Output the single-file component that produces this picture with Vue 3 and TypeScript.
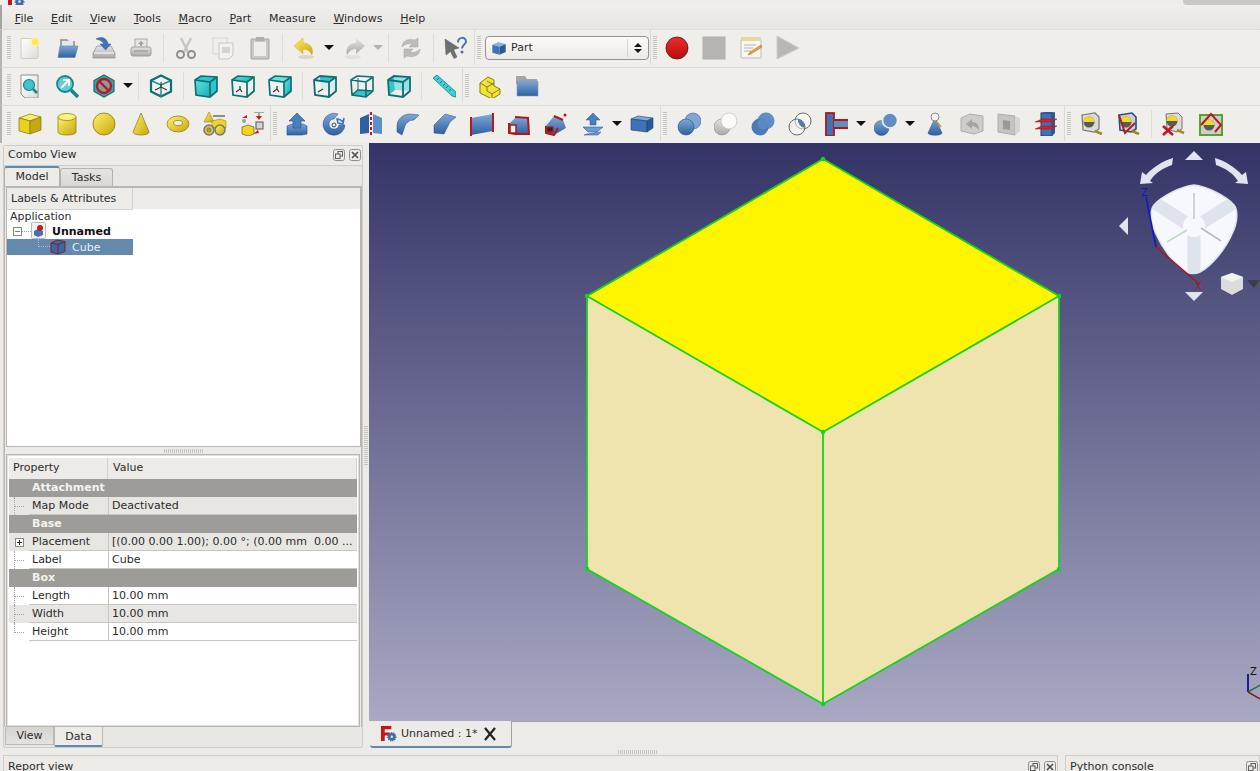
<template>
  <div class="app">
    <svg class="sprite" aria-hidden="true">
      <defs>
        <linearGradient id="gBlue" x1="0" y1="0" x2="0" y2="1"><stop offset="0" stop-color="#7ea8d8" /><stop offset="1" stop-color="#2f609f" /></linearGradient>
        <linearGradient id="gYel" x1="0" y1="0" x2="1" y2="1"><stop offset="0" stop-color="#fff26a" /><stop offset="1" stop-color="#c8a60a" /></linearGradient>
        <linearGradient id="gTeal" x1="0" y1="0" x2="1" y2="1"><stop offset="0" stop-color="#5fe3e3" /><stop offset="1" stop-color="#17aeb2" /></linearGradient>
        <linearGradient id="gGrey" x1="0" y1="0" x2="0" y2="1"><stop offset="0" stop-color="#e6e4e0" /><stop offset="1" stop-color="#aaa8a4" /></linearGradient>
        <linearGradient id="gRed" x1="0" y1="0" x2="0" y2="1"><stop offset="0" stop-color="#ee2a2a" /><stop offset="1" stop-color="#b50f0f" /></linearGradient>
        <linearGradient id="gPage" x1="0" y1="0" x2="1" y2="1"><stop offset="0" stop-color="#ffffff" /><stop offset="1" stop-color="#dddcd8" /></linearGradient>
        <clipPath id="blobClip"><path d="M1194 185C1206 186 1226 196 1234 205C1238 210 1238 222 1232 234C1226 248 1212 266 1200 272C1195 274 1191 274 1187 272C1175 266 1162 248 1156 234C1150 222 1150 210 1154 205C1162 196 1182 186 1194 185z" /></clipPath>
      </defs>

      <!-- file / edit -->
      <symbol id="new" viewBox="0 0 24 24"><rect x="3" y="2.500" width="17" height="20" rx="1" fill="url(#gPage)" stroke="#cdccc8" /><circle cx="17" cy="6" r="5" fill="#fff49a" opacity=".7" /><circle cx="17" cy="6" r="3" fill="#ffe84a" /></symbol>
      <symbol id="open" viewBox="0 0 24 24"><path d="M5 3h7l2 2h6v8H5z" fill="#a3a3a1" /><path d="M7 5h11v8H7z" fill="#e8e7e4" /><path d="M5 10h18l-3 11.500H3z" fill="url(#gBlue)" stroke="#5a83b8" stroke-width=".6" /></symbol>
      <symbol id="save" viewBox="0 0 24 24"><path d="M5 10h14l4 7v5H1v-5z" fill="url(#gGrey)" stroke="#8d8c88" stroke-width=".7" /><path d="M2 17h20" stroke="#fff" /><path d="M4 3c6-3 11-1 12 5h3l-5.500 6L8 8h3.500C11 5.500 8 4 4 3z" fill="#3f74b6" stroke="#2f5f9c" stroke-width=".5" /></symbol>
      <symbol id="print" viewBox="0 0 24 24"><rect x="6" y="3" width="12" height="9" fill="#e6e5e2" stroke="#a8a7a3" /><path d="M12 5l3 3h-2v2h-2V8H9z" fill="#9aa0a6" /><rect x="2" y="11" width="20" height="9" rx="2" fill="url(#gGrey)" stroke="#a09f9b" /><path d="M5 15h14" stroke="#8d8c88" /></symbol>
      <symbol id="cut" viewBox="0 0 24 24"><path d="M7 2l7 14M17 2l-7 14" stroke="#c6c5c1" stroke-width="2.400" fill="none" /><circle cx="6.500" cy="18.500" r="3.500" fill="none" stroke="#8f8e8a" stroke-width="2" /><circle cx="17.500" cy="18.500" r="3.500" fill="none" stroke="#8f8e8a" stroke-width="2" /></symbol>
      <symbol id="copy" viewBox="0 0 24 24"><rect x="2" y="2" width="14" height="16" fill="#efeeeb" stroke="#d4d3cf" /><path d="M8 7h14v12l-4 4H8z" fill="#f2f1ee" stroke="#c6c5c1" /><rect x="11" y="11" width="8" height="6" fill="#d5d4d0" /></symbol>
      <symbol id="paste" viewBox="0 0 24 24"><rect x="3" y="3" width="18" height="20" rx="1" fill="#c9c8c4" stroke="#a3a29e" /><rect x="6" y="6" width="12" height="14" fill="#eeedea" /><rect x="8" y="1" width="8" height="4" fill="#aeada9" /></symbol>
      <symbol id="undo" viewBox="0 0 24 24"><ellipse cx="13" cy="21" rx="8" ry="2" fill="#d8d6d2" /><path d="M1 10l9-8v5c7 0 11 5 9 12-2-4-5-6-9-6v5z" fill="url(#gYel)" stroke="#d0b020" stroke-width=".5" /></symbol>
      <symbol id="redo" viewBox="0 0 24 24"><ellipse cx="11" cy="21" rx="8" ry="2" fill="#e2e0dc" /><path d="M23 10l-9-8v5C7 7 3 12 5 19c2-4 5-6 9-6v5z" fill="url(#gGrey)" /></symbol>
      <symbol id="refresh" viewBox="0 0 24 24"><path d="M3 11c0-6 6-9 13-7l3-2v9h-9l3-3c-4-1-7 0-10 3z" fill="#bdbbb7" stroke="#a5a4a0" stroke-width=".5" /><path d="M21 13c0 6-6 9-13 7l-3 2v-9h9l-3 3c4 1 7 0 10-3z" fill="#bdbbb7" stroke="#a5a4a0" stroke-width=".5" /></symbol>
      <symbol id="whats" viewBox="0 0 24 24"><path d="M1 3l14 9-5.500 1.500L13 21l-3 1.500-3.500-7L2 19z" fill="#6d7072" stroke="#55585a" stroke-width=".5" /><path d="M14 6.500c0-6 8-6 8-1 0 3-4 3-4 7" fill="none" stroke="#4a75a8" stroke-width="2" /><circle cx="18" cy="16" r="1.500" fill="#4a75a8" /></symbol>
      <symbol id="part" viewBox="0 0 24 24"><path d="M2 7l9-4 11 3-9 4z" fill="#8cb2de" /><path d="M2 7l11 3v12L2 19z" fill="#3f73b5" /><path d="M13 10l9-4v12l-9 4z" fill="#2a5a96" /></symbol>
      <symbol id="record" viewBox="0 0 24 24"><circle cx="12" cy="12" r="11" fill="url(#gRed)" stroke="#5d1010" stroke-width=".8" /></symbol>
      <symbol id="stop" viewBox="0 0 24 24"><rect x=".5" y=".5" width="23" height="23" rx="1" fill="#b7b4af" stroke="#cfcdc9" /></symbol>
      <symbol id="macro" viewBox="0 0 24 24"><rect x="2" y="3" width="20" height="19" rx="1" fill="#f7f6f2" stroke="#bcbbb6" /><rect x="2" y="1" width="20" height="4" fill="#e2d8a0" /><path d="M5 9h12M5 12h9M5 15h7" stroke="#b3b2ad" /><path d="M9 19l2-3 11-7 1 2-11 7z" fill="#e6a83a" stroke="#a0641e" stroke-width=".5" /></symbol>
      <symbol id="play" viewBox="0 0 24 24"><path d="M1 0l22 12L1 23z" fill="#bab7b2" stroke="#cfcdc9" /></symbol>

      <!-- view -->
      <symbol id="fitall" viewBox="0 0 24 24"><path d="M3 1h17v23H7l-4-4z" fill="url(#gPage)" stroke="#8f8e8a" /><circle cx="11" cy="11" r="5.500" fill="#42c2cc" stroke="#16858f" stroke-width="1.200" /><path d="M15 15l4 4" stroke="#16858f" stroke-width="2.500" /></symbol>
      <symbol id="fitsel" viewBox="0 0 24 24"><circle cx="10" cy="10" r="8" fill="#5ccfd6" stroke="#16858f" stroke-width="1.800" /><path d="M16 16l7 7" stroke="#16858f" stroke-width="3.500" /><path d="M6 14l7-7M8 6h6v6" stroke="#fff" stroke-width="1.800" fill="none" /></symbol>
      <symbol id="draw" viewBox="0 0 24 24"><path d="M12 1l10 5.500v11L12 23 2 17.500v-11z" fill="#2fa8ad" stroke="#0f6f75" stroke-width="1.200" /><circle cx="12" cy="12" r="7" fill="#8a9aa0" stroke="#b81a22" stroke-width="2.400" /><path d="M7 7l10 10" stroke="#b81a22" stroke-width="2.400" /></symbol>
      <symbol id="iso" viewBox="0 0 24 24"><path d="M12 1.500l10 5v11l-10 5-10-5v-11z" fill="#eef3f2" stroke="#0f6f75" stroke-width="2.200" /><path d="M3 7l9 4 9-4M12 11v12" fill="none" stroke="#1a8f95" stroke-width="1.500" /><path d="M12 8v5M6 16l6-3 6 3" fill="none" stroke="#333" stroke-width="1.100" /></symbol>
      <symbol id="vfront" viewBox="0 0 24 24"><path d="M1 6l15 2v15L2 21z" fill="url(#gTeal)" /><path d="M1 6l6-4 16 1-7 5zM16 8l7-5v14l-7 6z" fill="#2cc7cc" /><path d="M1 6l6-4 16 1v14l-7 6-14-2zM1 6l15 2 7-5M16 8v15" fill="none" stroke="#0f6f75" stroke-width="1.700" /></symbol>
      <symbol id="vtop" viewBox="0 0 24 24"><path d="M1 6l6-4 16 1-7 5z" fill="url(#gTeal)" /><path d="M1 6l15 2v15L2 21zM16 8l7-5v14l-7 6z" fill="#eef3f2" /><path d="M1 6l6-4 16 1v14l-7 6-14-2zM1 6l15 2 7-5M16 8v15" fill="none" stroke="#0f6f75" stroke-width="1.700" /><path d="M5 18l4-3 2 3M9 15v-3" fill="none" stroke="#333" stroke-width="1.200" /></symbol>
      <symbol id="vright" viewBox="0 0 24 24"><path d="M16 8l7-5v14l-7 6z" fill="url(#gTeal)" /><path d="M1 6l15 2v15L2 21z" fill="#eef3f2" /><path d="M1 6l6-4 16 1-7 5z" fill="#6fdede" /><path d="M1 6l6-4 16 1v14l-7 6-14-2zM1 6l15 2 7-5M16 8v15" fill="none" stroke="#0f6f75" stroke-width="1.700" /><path d="M5 18l4-3 2 3M9 15v-3" fill="none" stroke="#333" stroke-width="1.200" /></symbol>
      <symbol id="vrear" viewBox="0 0 24 24"><path d="M7 2l16 1v14L8 16z" fill="#35c4c8" /><path d="M1 6l15 2v15L2 21zM16 8l7-5v14l-7 6z" fill="#eef3f2" fill-opacity=".85" /><path d="M1 6l6-4 16 1v14l-7 6-14-2zM1 6l15 2 7-5M16 8v15" fill="none" stroke="#0f6f75" stroke-width="1.800" /><path d="M5 18l5-3" stroke="#333" stroke-width="1.200" /></symbol>
      <symbol id="vbottom" viewBox="0 0 24 24"><path d="M2 21l6-5 15 1-7 6z" fill="#35c4c8" /><path d="M1 6l6-4 16 1-7 5z" fill="#eef3f2" /><path d="M1 6l6-4 16 1v14l-7 6-14-2zM1 6l15 2 7-5M16 8v15M2 21l6-5 15 1" fill="none" stroke="#0f6f75" stroke-width="1.600" /><path d="M8 4v12" stroke="#0f6f75" /></symbol>
      <symbol id="vleft" viewBox="0 0 24 24"><path d="M1 6l6-4 1 14-6 5z" fill="#35c4c8" /><path d="M7 2l16 1v14L8 16z" fill="#8fe3e3" /><path d="M1 6l6-4 16 1v14l-7 6-14-2zM1 6l15 2 7-5M16 8v15" fill="none" stroke="#0f6f75" stroke-width="1.800" /></symbol>
      <symbol id="ruler" viewBox="0 0 24 24"><path d="M1 4l4-3 19 17v5l-4-1z" fill="#3fd0d4" stroke="#0f7f85" stroke-width=".8" /><path d="M5 6l2-2M8 9l2-2M11 12l2-2M14 14l2-2M17 17l2-2" stroke="#0f7f85" /></symbol>
      <symbol id="yelpart" viewBox="0 0 24 24"><path d="M2 9l8-6 6 3v6l6 3v5l-8 5-12-6z" fill="#f2e23c" stroke="#8a7c10" /><path d="M2 9l7 4v4l5 3v4M9 13l7-4M14 20l8-5M9 7l7 4" fill="none" stroke="#8a7c10" /></symbol>
      <symbol id="folder" viewBox="0 0 24 24"><path d="M1 2h9l2 3h10v5H1z" fill="#a6a5a3" /><rect x="2" y="7" width="21" height="15" fill="url(#gBlue)" stroke="#7c9cc4" stroke-width=".6" /></symbol>

      <!-- part primitives -->
      <symbol id="box" viewBox="0 0 24 24"><path d="M1 6l11-4 11 3-11 4z" fill="#f9ef6a" stroke="#857512" stroke-width=".7" /><path d="M1 6l11 3v13L1 19z" fill="#ead21c" stroke="#857512" stroke-width=".7" /><path d="M12 9l11-4v13l-11 4z" fill="#c6a80e" stroke="#857512" stroke-width=".7" /></symbol>
      <symbol id="cyl" viewBox="0 0 24 24"><path d="M3 5v15c0 4 18 4 18 0V5z" fill="url(#gYel)" stroke="#857512" stroke-width=".7" /><ellipse cx="12" cy="5" rx="9" ry="3.500" fill="#fbf27a" stroke="#857512" stroke-width=".7" /></symbol>
      <symbol id="sphere" viewBox="0 0 24 24"><circle cx="12" cy="12" r="11" fill="url(#gYel)" stroke="#857512" stroke-width=".8" /></symbol>
      <symbol id="cone" viewBox="0 0 24 24"><path d="M12 1L4 20c0 4 16 4 16 0z" fill="url(#gYel)" stroke="#857512" stroke-width=".7" /></symbol>
      <symbol id="torus" viewBox="0 0 24 24"><ellipse cx="12" cy="12" rx="11" ry="8" fill="url(#gYel)" stroke="#857512" stroke-width=".7" /><ellipse cx="12" cy="11" rx="4.500" ry="2.500" fill="#f0eeea" stroke="#857512" stroke-width=".7" /></symbol>
      <symbol id="prims" viewBox="0 0 24 24"><path d="M6 0L1 10h10z" fill="url(#gYel)" stroke="#857512" stroke-width=".5" /><path d="M10 4h12" stroke="#8d8c88" stroke-width="2" /><path d="M9 9l8-2 6 2v7H9z" fill="#eed524" stroke="#857512" stroke-width=".5" /><circle cx="6" cy="18" r="5" fill="#d8c53a" stroke="#777" stroke-width="1.500" /><circle cx="6" cy="18" r="2" fill="#b9a51e" stroke="#777" /><circle cx="17" cy="18" r="5" fill="url(#gYel)" stroke="#777" stroke-width="1.500" /></symbol>
      <symbol id="builder" viewBox="0 0 24 24"><path d="M2 15l6-2 6 2v7l-6 2-6-2z" fill="#eed524" stroke="#6b5f10" stroke-width=".7" /><path d="M14 0h10M19 1v6" stroke="#8d8c88" stroke-width="1.500" /><path d="M19 8l-3-4h6z" fill="#c81c1c" /><rect x="16" y="10" width="7" height="7" fill="#d5d4d0" stroke="#6d6c68" stroke-width="1.200" /><path d="M13 22l5-4 1 3zM2 6l5-3v3z" fill="#c81c1c" /><circle cx="4" cy="9" r="2" fill="#8fa0b0" /></symbol>

      <!-- part tools -->
      <symbol id="extrude" viewBox="0 0 24 24"><path d="M2 14l5-2h11l4 2v8l-5 1H2z" fill="url(#gBlue)" stroke="#274f85" stroke-width=".6" /><path d="M12 1l8 8h-4v7H8V9H4z" fill="#4a7fbf" stroke="#274f85" stroke-width=".6" /></symbol>
      <symbol id="revolve" viewBox="0 0 24 24"><path d="M16 2A11 11 0 1 0 23 13h-6a5 5 0 1 1-5-6z" fill="url(#gBlue)" stroke="#274f85" stroke-width=".5" /><circle cx="12" cy="13" r="2" fill="#e8eef5" stroke="#274f85" /><path d="M15 7a8 8 0 0 1 6 3l1-4-1 6-5-1z" fill="none" stroke="#3f73b5" stroke-width="1.500" /></symbol>
      <symbol id="mirror" viewBox="0 0 24 24"><path d="M1 6l9-4v19l-9 1z" fill="#2f609f" /><path d="M14 2l9 4v16l-9-1z" fill="#5f8dc5" /><path d="M12 0v24" stroke="#c01818" stroke-width="2" stroke-dasharray="3 2" /></symbol>
      <symbol id="fillet" viewBox="0 0 24 24"><path d="M1 14C1 7 7 2 14 2l9 1-5 5c-5 0-8 3-9 6l-3 9-5-3z" fill="url(#gBlue)" stroke="#274f85" stroke-width=".5" /></symbol>
      <symbol id="chamfer" viewBox="0 0 24 24"><path d="M1 13L12 2l11 3-6 5-6 12-10-1z" fill="url(#gBlue)" stroke="#274f85" stroke-width=".5" /></symbol>
      <symbol id="face" viewBox="0 0 24 24"><path d="M1 6l22-4v17L1 23z" fill="url(#gBlue)" /><path d="M1 5v19M23 1v19" stroke="#c01818" stroke-width="2" /></symbol>
      <symbol id="loft" viewBox="0 0 24 24"><path d="M1 13l8-8 12 1 1 16H5l-3 0z" fill="url(#gBlue)" /><path d="M8 5l14 1M21 6l1 16H8l-6-1V11" fill="none" stroke="#b01818" stroke-width="2" /><rect x="3" y="13" width="6" height="8" fill="#e8eef5" stroke="#b01818" stroke-width="1.500" /></symbol>
      <symbol id="sweep" viewBox="0 0 24 24"><path d="M2 14l8-10 9 4 3 8-12 7-8-2z" fill="url(#gBlue)" /><path d="M10 4l9 4M2 14v7l8 2 4-7" fill="none" stroke="#b01818" stroke-width="2" /><rect x="3" y="15" width="6" height="5" fill="#3a2020" stroke="#b01818" /><circle cx="21" cy="3" r="1.500" fill="#b01818" /></symbol>
      <symbol id="offsetf" viewBox="0 0 24 24"><path d="M12 1l7 7h-4v5H9V8H5z" fill="#4a7fbf" stroke="#274f85" stroke-width=".5" /><path d="M2 15h20L16 20H7zM6 22l14-2-3 3H3z" fill="#6b9bd4" stroke="#274f85" stroke-width=".5" /></symbol>
      <symbol id="thick" viewBox="0 0 24 24"><path d="M1 7l7-3 15 2-6 3z" fill="#7ea8d8" stroke="#1e3f70" stroke-width=".6" /><path d="M1 7l16 2v11L1 18z" fill="#3f73b5" stroke="#1e3f70" stroke-width=".6" /><path d="M17 9l6-3v10l-6 4z" fill="#2a5a96" stroke="#1e3f70" stroke-width=".6" /></symbol>
      <symbol id="bcommon" viewBox="0 0 24 24"><circle cx="16" cy="9" r="8" fill="#7ea5d3" stroke="#3c689f" stroke-width=".6" /><circle cx="9" cy="15" r="8" fill="url(#gBlue)" stroke="#264f86" stroke-width=".6" /></symbol>
      <symbol id="bcut" viewBox="0 0 24 24"><circle cx="8" cy="15" r="8" fill="url(#gGrey)" stroke="#8d8c88" stroke-width=".6" /><circle cx="15" cy="9" r="8" fill="#fbfaf8" stroke="#b5b4b0" stroke-width=".6" /></symbol>
      <symbol id="bfuse" viewBox="0 0 24 24"><circle cx="15" cy="9" r="8.500" fill="#5f8dc5" /><circle cx="9" cy="15" r="8.500" fill="#4a7bb8" /><circle cx="12" cy="12" r="5.500" fill="#5a88c2" /></symbol>
      <symbol id="bsect" viewBox="0 0 24 24"><circle cx="15" cy="9" r="8" fill="#f6f5f2" stroke="#6d6c68" /><circle cx="9" cy="15" r="8" fill="#f6f5f2" fill-opacity=".5" stroke="#6d6c68" /><path d="M10 7.200a8 8 0 0 1 6.800 8.800A8 8 0 0 1 10 7.200z" fill="#4a7bb8" /></symbol>
      <symbol id="join" viewBox="0 0 24 24"><rect x="1" y="1" width="8" height="23" fill="#3f73b5" stroke="#b01818" stroke-width="1.800" /><rect x="9" y="8" width="14" height="8" fill="#5f8dc5" /><path d="M9 8h14M9 16h14" stroke="#b01818" stroke-width="2" /></symbol>
      <symbol id="split" viewBox="0 0 24 24"><circle cx="7.500" cy="16" r="7.500" fill="url(#gBlue)" stroke="#264f86" stroke-width=".5" /><circle cx="16" cy="8.500" r="7.500" fill="#5f8dc5" stroke="#f0eeea" stroke-width="1.600" /></symbol>
      <symbol id="inspect" viewBox="0 0 24 24"><path d="M12 6L5 21c0 3 14 3 14 0z" fill="url(#gBlue)" stroke="#274f85" stroke-width=".5" /><circle cx="12" cy="5" r="4" fill="#f0f2f4" stroke="#8d8c88" /><path d="M14 10l4 5" stroke="#d0a030" stroke-width="2" /></symbol>
      <symbol id="refine" viewBox="0 0 24 24"><path d="M1 6l9-4 13 2v15l-9 3-13-3z" fill="#cfcdc9" stroke="#aeada9" /><path d="M6 12l6-5v3c5 0 7 3 7 8-2-2-4-4-7-4v3z" fill="#a5a4a0" /></symbol>
      <symbol id="shell" viewBox="0 0 24 24"><path d="M1 2l17 2v19l-17-3z" fill="#c6c4c0" stroke="#aeada9" /><path d="M18 4l5 2v13l-5 4z" fill="#d8d6d2" /><path d="M6 8l7 1v9l-7-1z" fill="#9b9a96" /></symbol>
      <symbol id="slices" viewBox="0 0 24 24"><rect x="7" y="1" width="11" height="23" fill="#3f73b5" stroke="#1e3f70" /><path d="M7 1l4-1h9l-2 1zM18 1l3-1v21l-3 3z" fill="#2a5a96" /><path d="M1 10l7-3h15l-6 3zM1 17l7-3h15l-6 3z" fill="#d8202a" stroke="#a01018" stroke-width=".5" /></symbol>
      <symbol id="meas1" viewBox="0 0 24 24"><path d="M2 3l13-2 4 4v12l-5 3L3 18z" fill="#dcdbd7" stroke="#777671" stroke-width="1.200" /><circle cx="9" cy="10" r="5.500" fill="#5a5a58" /><path d="M3.500 10a5.500 5.500 0 0 1 11 0z" fill="#f2d820" /><path d="M15 19l7 3" stroke="#9a8a20" stroke-width="2.500" /></symbol>
      <symbol id="meas2" viewBox="0 0 24 24"><path d="M2 3l13-2 4 4v12l-5 3L3 18z" fill="#d0cfca" stroke="#1f4f8f" stroke-width="1.600" /><circle cx="9" cy="10" r="5.500" fill="#5a5a58" /><path d="M3.500 10a5.500 5.500 0 0 1 11 0z" fill="#f2d820" /><path d="M15 19l7 3" stroke="#9a8a20" stroke-width="2.500" /><path d="M2 3l6 18 10-10" fill="none" stroke="#b81a22" stroke-width="2" /></symbol>
      <symbol id="meas3" viewBox="0 0 24 24"><path d="M4 2l12-1 4 4v12l-5 3L5 17z" fill="#dcdbd7" stroke="#76756f" /><circle cx="10" cy="9" r="5.500" fill="#5a5a58" /><path d="M4.500 9a5.500 5.500 0 0 1 11 0z" fill="#f2d820" /><path d="M15 18l7 3" stroke="#a08a20" stroke-width="2.500" /><path d="M1 14l10 9M11 14L1 23" stroke="#b81a22" stroke-width="2.600" /></symbol>
      <symbol id="meas4" viewBox="0 0 24 24"><rect x="1" y="3" width="22" height="20" fill="#cfcec9" stroke="#5aa030" stroke-width="2" /><circle cx="10" cy="13" r="5.500" fill="#5a5a58" /><path d="M4.500 13a5.500 5.500 0 0 1 11 0z" fill="#f2d820" /><path d="M2 13L12 2l10 11-6 7" fill="none" stroke="#b81a22" stroke-width="2" /></symbol>

      <!-- small chrome -->
      <symbol id="dfloat" viewBox="0 0 12 12"><rect x=".5" y=".5" width="11" height="11" rx="2" fill="none" stroke="#8f8d88" /><rect x="5" y="2.500" width="4.500" height="4.500" fill="none" stroke="#5e5d59" /><rect x="2.500" y="5" width="4.500" height="4.500" fill="#edebe7" stroke="#5e5d59" /></symbol>
      <symbol id="dclose" viewBox="0 0 12 12"><rect x=".5" y=".5" width="11" height="11" rx="2" fill="none" stroke="#8f8d88" /><path d="M3 3l6 6M9 3L3 9" stroke="#4e4d49" stroke-width="1.600" /></symbol>
      <symbol id="logo" viewBox="0 0 18 18"><path d="M1 1h11v3.500H5V8h5v3H5v6H1z" fill="#c4161c" /><circle cx="12.500" cy="12.500" r="4" fill="#3b6ea8" stroke="#3b6ea8" stroke-dasharray="1.200 1" stroke-width="2" /><circle cx="12.500" cy="12.500" r="1.300" fill="#e8e6e2" /></symbol>
      <symbol id="docicon" viewBox="0 0 15 17"><rect x=".5" y=".5" width="14" height="16" rx="1" fill="#f4f3f0" stroke="#bcbab6" /><path d="M3 9l4-2 5 2v4l-5 2-4-2z" fill="#3f73b5" /><circle cx="9" cy="6" r="3" fill="#c81c1c" /></symbol>
      <symbol id="treecube" viewBox="0 0 16 16"><path d="M1 4l6-3 8 1.500v10L8 15l-7-2z" fill="#3a68a0" /><path d="M1 4l7 1.500 7-3M8 5.500V15" fill="none" stroke="#7a2038" /><path d="M1 4v9l7 2 7-2.500v-10L7 1z" fill="none" stroke="#7a2038" /></symbol>
      <symbol id="docx" viewBox="0 0 14 14"><path d="M2 1l10 12M12 1L2 13" stroke="#222" stroke-width="2.200" /></symbol>
    </svg>

    <div class="title-strip">
      <svg class="title-logo"><use href="#logo" /></svg>
      <span class="title-corner"></span>
    </div>

    <nav class="menubar">
      <span v-for="menu in menus" :key="menu.label" class="menu-item">
        <u v-if="menu.underline">{{ menu.label[0] }}</u>{{ menu.underline ? menu.label.slice(1) : menu.label }}
      </span>
    </nav>

    <div v-for="(row, r) in toolbarRows" :key="r" class="toolbar-row" :class="'row-' + r">
      <div v-for="(bar, b) in row" :key="b" class="toolbar">
        <span class="handle" :class="{ first: b === 0 }"></span>
        <template v-for="(item, i) in bar" :key="i">
          <span v-if="item === 'sep'" class="sep"></span>
          <span v-else-if="item === 'arrow'" class="drop"></span>
          <span v-else-if="item === 'arrow-off'" class="drop off"></span>
          <div v-else-if="item === 'combo'" class="wb-combo">
            <svg class="wb-icon"><use href="#part" /></svg>
            <span class="wb-label">Part</span>
            <span class="wb-spin"><i class="up"></i><i class="down"></i></span>
          </div>
          <span v-else class="tool"><svg class="tool-icon"><use :href="'#' + item" /></svg></span>
        </template>
      </div>
    </div>

    <div class="workspace">
      <aside class="combo">
        <div class="dock-title">
          <span>Combo View</span>
          <span class="dock-buttons">
            <svg><use href="#dfloat" /></svg>
            <svg><use href="#dclose" /></svg>
          </span>
        </div>
        <div class="top-tabs">
          <span class="top-tab active">Model</span>
          <span class="top-tab">Tasks</span>
        </div>
        <div class="pane">
          <div class="tree">
            <div class="tree-head"><span>Labels &amp; Attributes</span></div>
            <div class="tree-row app-row">Application</div>
            <div class="tree-row doc-row">
              <span class="expander minus"></span>
              <span class="dash"></span>
              <svg class="doc-icon"><use href="#docicon" /></svg>
              <strong>Unnamed</strong>
            </div>
            <div class="tree-row cube-row">
              <span class="elbow"></span>
              <svg class="cube-icon"><use href="#treecube" /></svg>
              <span>Cube</span>
            </div>
          </div>
          <div class="pane-split"><span class="grip"></span></div>
          <div class="props">
            <div class="props-head">
              <span>Property</span>
              <span>Value</span>
            </div>
            <template v-for="row in propRows" :key="row.name">
              <div v-if="row.group" class="group-row">{{ row.name }}</div>
              <div v-else class="prop-row" :class="{ alt: row.alt }">
                <span class="prop-tree">
                  <span v-if="row.expand" class="expander plus"></span>
                  <span v-else class="twig" :class="{ last: row.last }"></span>
                </span>
                <span class="prop-name">{{ row.name }}</span>
                <span class="prop-value">{{ row.value }}</span>
              </div>
            </template>
          </div>
        </div>
        <div class="bottom-tabs">
          <span class="bottom-tab">View</span>
          <span class="bottom-tab active">Data</span>
        </div>
      </aside>

      <div class="side-split"><span class="vgrip"></span></div>

      <main class="center">
        <div class="viewport">
          <svg class="scene" viewBox="369 143 891 578">
            <polygon points="823,159 1059,296 823,432 587,296" fill="#fff500" />
            <polygon points="587,296 823,432 823,704 587,569" fill="#efe3ae" />
            <polygon points="1059,296 823,432 823,704 1059,569" fill="#efe3ae" />
            <path d="M823 159L1059 296 823 432 587 296zM823 432V704M587 296V569L823 704 1059 569V296" fill="none" stroke="#16d21f" stroke-width="1.800" />
            <g fill="#16d21f">
              <circle cx="823" cy="159" r="2.200" /><circle cx="587" cy="296" r="2.200" /><circle cx="1059" cy="296" r="2.200" />
              <circle cx="823" cy="432" r="2.200" /><circle cx="587" cy="569" r="2.200" /><circle cx="1059" cy="569" r="2.200" /><circle cx="823" cy="704" r="2.200" />
            </g>

            <!-- navigation cube -->
            <g fill="#e0e4ef">
              <polygon points="1194,151 1203,160 1185,160" />
              <polygon points="1128,217 1128,235 1119,226" />
              <polygon points="1185,292 1203,292 1194,301" />
              <path d="M1173 158L1172 165C1163 168 1155 173 1150 181L1153 183L1140 184L1142 172L1146 175C1153 167 1163 161 1173 158z" />
              <path d="M1215 158L1216 165C1225 168 1233 173 1238 181L1235 183L1248 184L1246 172L1242 175C1235 167 1225 161 1215 158z" />
            </g>
            <path d="M1194 185C1206 186 1226 196 1234 205C1238 210 1238 222 1232 234C1226 248 1212 266 1200 272C1195 274 1191 274 1187 272C1175 266 1162 248 1156 234C1150 222 1150 210 1154 205C1162 196 1182 186 1194 185z" fill="#f6f8fd" stroke="#dfe3ee" stroke-width="1.500" />
            <g stroke="#dfe3ec" stroke-width="13" fill="none" clip-path="url(#blobClip)">
              <path d="M1194 228L1150 200M1194 228L1238 200M1194 228V276" />
            </g>
            <circle cx="1194" cy="226" r="11" fill="#f6f8fd" />
            <path d="M1194 193V219" stroke="#c4c5cb" stroke-width="1.500" />
            <path d="M1201 228L1221 241" stroke="#b9bac2" stroke-width="1.500" />
            <path d="M1187 230L1167 242" stroke="#bcdcbc" stroke-width="1.500" />
            <path d="M1146 197L1156 247" stroke="#1414c8" stroke-width="1.600" />
            <path d="M1156 247L1199 284" stroke="#a0182c" stroke-width="1.600" />
            <text x="1141" y="196" class="axis-z">Z</text>
            <text x="1195" y="290" class="axis-x">X</text>
            <polygon points="1232,273 1243,277 1243,289 1232,295 1221,289 1221,277" fill="#dcdcdc" />
            <polygon points="1232,273 1243,277 1232,282 1221,277" fill="#f2f2f2" />
            <polygon points="1247,280 1260,280 1254,288" fill="#3d3d4c" />

            <!-- corner axes -->
            <path d="M1248 692V674" stroke="#1c1c9c" stroke-width="2" />
            <path d="M1248 692L1262 684" stroke="#1f7f30" stroke-width="1.500" />
            <path d="M1248 692L1262 700" stroke="#8a1a20" stroke-width="1.500" />
            <text x="1250" y="675" class="axis-black">Z</text>
          </svg>
        </div>
        <div class="doc-tabs">
          <div class="doc-tab">
            <svg class="doc-logo"><use href="#logo" /></svg>
            <span>Unnamed : 1*</span>
            <svg class="doc-close"><use href="#docx" /></svg>
          </div>
          <div class="doc-rest"></div>
        </div>
      </main>
    </div>

    <div class="hsplit"><span class="grip wide"></span></div>

    <div class="bottom-docks">
      <div class="bottom-dock report">
        <span>Report view</span>
        <span class="dock-buttons">
          <svg><use href="#dfloat" /></svg>
          <svg><use href="#dclose" /></svg>
        </span>
      </div>
      <div class="bottom-dock python">
        <span>Python console</span>
        <span class="dock-buttons">
          <svg><use href="#dfloat" /></svg>
        </span>
      </div>
    </div>
  </div>
</template>

<script setup lang="ts">
type PropRow = {
  name: string
  value?: string
  group?: boolean
  alt?: boolean
  expand?: boolean
  last?: boolean
}

const menus = [
  { label: 'File', underline: true },
  { label: 'Edit', underline: true },
  { label: 'View', underline: true },
  { label: 'Tools', underline: true },
  { label: 'Macro', underline: true },
  { label: 'Part', underline: true },
  { label: 'Measure', underline: false },
  { label: 'Windows', underline: true },
  { label: 'Help', underline: true }
]

const toolbarRows: string[][][] = [
  [
    ['new', 'open', 'save', 'print', 'sep', 'cut', 'copy', 'paste', 'sep', 'undo', 'arrow', 'redo', 'arrow-off', 'sep', 'refresh', 'sep', 'whats'],
    ['combo'],
    ['record', 'stop', 'macro', 'play']
  ],
  [
    ['fitall', 'fitsel', 'draw', 'arrow', 'sep', 'iso', 'sep', 'vfront', 'vtop', 'vright', 'sep', 'vrear', 'vbottom', 'vleft', 'sep', 'ruler'],
    ['yelpart', 'folder']
  ],
  [
    ['box', 'cyl', 'sphere', 'cone', 'torus', 'prims', 'builder'],
    ['extrude', 'revolve', 'mirror', 'fillet', 'chamfer', 'face', 'loft', 'sweep', 'offsetf', 'arrow', 'thick'],
    ['bcommon', 'bcut', 'bfuse', 'bsect', 'join', 'arrow', 'split', 'arrow', 'inspect', 'refine', 'shell', 'slices'],
    ['meas1', 'meas2', 'sep', 'meas3', 'meas4']
  ]
]

const propRows: PropRow[] = [
  { name: 'Attachment', group: true },
  { name: 'Map Mode', value: 'Deactivated', alt: true },
  { name: 'Base', group: true },
  { name: 'Placement', value: '[(0.00 0.00 1.00); 0.00 °; (0.00 mm  0.00 ...', alt: true, expand: true },
  { name: 'Label', value: 'Cube' },
  { name: 'Box', group: true },
  { name: 'Length', value: '10.00 mm' },
  { name: 'Width', value: '10.00 mm', alt: true },
  { name: 'Height', value: '10.00 mm', last: true }
]
</script>

<style>
html,
body {
  margin: 0;
  overflow: hidden;
}
</style>

<style scoped>
.app {
  width: 1260px;
  height: 771px;
  overflow: hidden;
  background: #edebe7;
  color: #2b2b2b;
  font-family: 'DejaVu Sans', sans-serif;
  font-size: 11px;
  box-sizing: border-box;
}

.sprite {
  display: block;
  width: 0;
  height: 0;
}

.title-strip {
  height: 5px;
  overflow: hidden;
  display: flex;
  justify-content: space-between;
  background: #efede9;
}

.title-logo {
  width: 18px;
  height: 18px;
  margin: -11px 0 0 7px;
}

.title-corner {
  width: 77px;
  height: 5px;
  background: #c9c8c4;
  border-bottom-left-radius: 4px;
}

.menubar {
  height: 24px;
  box-sizing: border-box;
  padding: 3px 0 0 4px;
  display: flex;
  align-items: center;
  background: linear-gradient(#f0efeb, #e7e5e1);
  border-left: 2px solid #a5a4a0;
}

.menu-item {
  padding: 0 8.85px;
}

.toolbar-row {
  height: 38px;
  box-sizing: border-box;
  display: flex;
  border-top: 1px solid #dcdad5;
  border-left: 2px solid #b5b4b0;
  background: #f0eeea;
}

.toolbar {
  display: flex;
  align-items: center;
  height: 37px;
  box-sizing: border-box;
  padding-bottom: 2px;
}

.handle {
  width: 8px;
  height: 35px;
  box-sizing: border-box;
  border-left: 1px solid #dcdad5;
  background: repeating-linear-gradient(#c6c4c0 0 1px, transparent 1px 2px) no-repeat 2px center / 4px 24px;
}

.handle.first {
  width: 9px;
  border-left: 0;
  background-position: 5px center;
}

.row-1 .toolbar:nth-child(2) .handle,
.row-2 .toolbar:nth-child(4) .handle {
  width: 9px;
}

.row-2 .toolbar:nth-child(3) .handle {
  width: 10px;
}

.tool {
  width: 37px;
  height: 35px;
  display: flex;
  align-items: center;
  justify-content: center;
}

.tool-icon {
  width: 24px;
  height: 24px;
}

.drop {
  width: 12px;
  height: 35px;
  display: flex;
  align-items: center;
  justify-content: center;
}

.drop::before {
  content: '';
  border-left: 5px solid transparent;
  border-right: 5px solid transparent;
  border-top: 5px solid #111;
}

.drop.off::before {
  border-top-color: #b4b2ae;
}

.sep {
  width: 8px;
  height: 35px;
  display: flex;
  justify-content: center;
  align-items: center;
}

.sep::before {
  content: '';
  width: 1px;
  height: 28px;
  background: #dedcd8;
}

.wb-combo {
  width: 164px;
  height: 24px;
  margin: 0 1px 0 3px;
  box-sizing: border-box;
  border: 1px solid #94928e;
  border-radius: 4px;
  background: linear-gradient(#fbfaf7, #eceae6);
  display: flex;
  align-items: center;
  padding-left: 5px;
}

.wb-icon {
  width: 16px;
  height: 16px;
}

.wb-label {
  margin-left: 4px;
  flex: 1;
}

.wb-spin {
  width: 20px;
  height: 18px;
  border-left: 1px solid #d6d4d0;
  display: flex;
  flex-direction: column;
  align-items: center;
  justify-content: center;
  gap: 2px;
}

.wb-spin i {
  border-left: 4px solid transparent;
  border-right: 4px solid transparent;
}

.wb-spin .up {
  border-bottom: 4px solid #111;
}

.wb-spin .down {
  border-top: 4px solid #111;
}

.workspace {
  height: 605px;
  display: flex;
}

.combo {
  width: 360px;
  height: 603px;
  margin: 2px 0 0 3px;
  box-sizing: border-box;
  border: 1px solid #cfccc7;
  border-radius: 2px;
  background: #e8e6e2;
  display: flex;
  flex-direction: column;
  flex-shrink: 0;
}

.dock-title {
  height: 20px;
  flex-shrink: 0;
  box-sizing: border-box;
  display: flex;
  align-items: center;
  justify-content: space-between;
  padding: 0 1px 2px 4px;
  background: #edebe7;
  border-bottom: 1px solid #cfccc7;
  line-height: 16px;
}

.dock-buttons {
  display: flex;
  gap: 4px;
  align-items: center;
}

.dock-buttons svg {
  width: 12px;
  height: 12px;
}

.top-tabs {
  height: 20px;
  display: flex;
  align-items: flex-end;
  flex-shrink: 0;
}

.top-tab {
  width: 53px;
  height: 18px;
  box-sizing: border-box;
  border: 1px solid #b4b2ad;
  border-bottom: 0;
  border-radius: 3px 3px 0 0;
  background: linear-gradient(#e6e4e0, #d9d7d3);
  display: flex;
  align-items: center;
  justify-content: center;
}

.top-tab.active {
  width: 56px;
  height: 20px;
  padding-bottom: 2px;
  border-top: 2px solid #5f89b0;
  background: #edebe7;
}

.pane {
  flex-shrink: 0;
  flex-grow: 1;
  box-sizing: border-box;
  border: 1px solid #bab8b3;
  border-bottom: 0;
  padding: 0 0 0 1px;
  display: flex;
  flex-direction: column;
  background: #edebe7;
}

.tree {
  width: 355px;
  height: 260px;
  flex-shrink: 0;
  box-sizing: border-box;
  border: 1px solid #b8b6b1;
  background: #fff;
}

.tree-head {
  height: 21px;
  background: #edebe7;
  display: flex;
}

.tree-head span {
  width: 121px;
  padding-left: 4px;
  line-height: 22px;
  border-right: 1px solid #d4d2cd;
  box-shadow: 0 1px 0 #d4d2cd;
}

.tree-row {
  display: flex;
  align-items: center;
}

.app-row {
  height: 15px;
  padding-left: 3px;
}

.doc-row {
  height: 15px;
  padding-left: 6px;
}

.doc-row strong {
  margin-left: 6px;
  color: #111;
}

.expander {
  width: 9px;
  height: 9px;
  box-sizing: border-box;
  border: 1px solid #8a8884;
  background: linear-gradient(#7a7874, #7a7874) no-repeat center / 5px 1px, #fff;
  flex-shrink: 0;
}

.expander.plus {
  background:
    linear-gradient(#2b2b2b, #2b2b2b) no-repeat center / 5px 1px,
    linear-gradient(#2b2b2b, #2b2b2b) no-repeat center / 1px 5px,
    #fff;
}

.dash {
  width: 9px;
  border-top: 1px dotted #a5a39f;
}

.doc-icon {
  width: 15px;
  height: 17px;
  margin-top: -2px;
}

.cube-row {
  width: 126px;
  height: 16px;
  padding-left: 31px;
  box-sizing: border-box;
  background: #6389ad;
  color: #e9eff5;
}

.elbow {
  width: 12px;
  height: 8px;
  margin-top: -8px;
  box-sizing: border-box;
  border-left: 1px dotted #9fb6cc;
  border-bottom: 1px dotted #9fb6cc;
}

.cube-icon {
  width: 16px;
  height: 16px;
  margin-right: 6px;
}

.pane-split {
  height: 7px;
  flex-shrink: 0;
  display: flex;
  justify-content: center;
  align-items: center;
}

.grip {
  width: 40px;
  height: 4px;
  background: repeating-linear-gradient(90deg, #c6c4c0 0 1px, transparent 1px 2px);
}

.props {
  width: 354px;
  height: 273px;
  flex-shrink: 0;
  box-sizing: border-box;
  border: 1px solid #b8b6b1;
  padding: 0 2px;
  background: #fff;
  box-shadow: inset 0 0 0 1px #e2e0dc;
}

.props-head {
  height: 21px;
  margin-top: 3px;
  display: grid;
  grid-template-columns: 99px 1fr;
  background: #edebe7;
  line-height: 20px;
}

.props-head span {
  padding-left: 4px;
  border-right: 1px solid #d4d2cd;
}

.props-head span + span {
  padding-left: 5px;
}

.group-row {
  height: 18px;
  line-height: 18px;
  padding-left: 23px;
  background: #9d9c98;
  color: #f4f3f0;
  font-weight: 700;
}

.prop-row {
  height: 18px;
  display: grid;
  grid-template-columns: 20px 79px 1fr;
  background: #fff;
}

.prop-row.alt {
  background: #e8e6e3;
}

.prop-tree {
  display: flex;
  align-items: center;
  justify-content: flex-end;
  padding-right: 5px;
}

.twig {
  width: 10px;
  height: 18px;
  box-sizing: border-box;
  border-left: 1px dotted #a5a39f;
  background: linear-gradient(90deg, #a5a39f 50%, transparent 50%) repeat-x 0 9px / 2px 1px;
}

.twig.last {
  height: 10px;
  margin-bottom: 8px;
}

.prop-name,
.prop-value {
  line-height: 17px;
  border-bottom: 1px solid #c8c6c2;
  padding-left: 3px;
  white-space: pre;
  overflow: hidden;
}

.prop-value {
  border-left: 1px solid #c8c6c2;
}

.bottom-tabs {
  height: 21px;
  flex-shrink: 0;
  padding-left: 1px;
  display: flex;
  align-items: flex-start;
}

.bottom-tab {
  width: 49px;
  height: 18px;
  box-sizing: border-box;
  border: 1px solid #bab8b3;
  border-top: 0;
  background: linear-gradient(#d6d4d0, #e4e2de);
  display: flex;
  align-items: center;
  justify-content: center;
}

.bottom-tab.active {
  height: 20px;
  background: #edebe7;
  border-bottom: 2px solid #5f89b0;
  border-radius: 0 0 2px 2px;
}

.side-split {
  width: 6px;
  flex-shrink: 0;
  display: flex;
  align-items: center;
  justify-content: center;
}

.vgrip {
  width: 4px;
  height: 40px;
  background: repeating-linear-gradient(#c6c4c0 0 1px, transparent 1px 2px);
}

.center {
  flex: 1;
  min-width: 0;
  display: flex;
  flex-direction: column;
}

.viewport {
  height: 578px;
  background: linear-gradient(#333466, #a9a9c4);
}

.scene {
  display: block;
  width: 891px;
  height: 578px;
}

.axis-z {
  font-size: 10px;
  fill: #1414c8;
}

.axis-x {
  font-size: 10px;
  fill: #a0182c;
}

.axis-black {
  font-size: 10px;
  fill: #111;
}

.doc-tabs {
  height: 27px;
  display: flex;
}

.doc-tab {
  width: 142px;
  margin-left: 1px;
  box-sizing: border-box;
  padding-left: 10px;
  display: flex;
  align-items: center;
  background: #edebe7;
  border-right: 1px solid #a5a39f;
  border-bottom: 2px solid #5f89b0;
  border-radius: 0 0 3px 3px;
}

.doc-logo {
  width: 17px;
  height: 17px;
  margin-right: 4px;
}

.doc-close {
  width: 14px;
  height: 14px;
  margin-left: 6px;
}

.doc-rest {
  flex: 1;
  border-top: 1px solid #a5a39f;
}

.hsplit {
  height: 7px;
  padding-left: 618px;
  display: flex;
  align-items: center;
}

.grip.wide {
  width: 40px;
}

.bottom-docks {
  height: 16px;
  display: flex;
  gap: 7px;
  padding-left: 3px;
}

.bottom-dock {
  height: 24px;
  box-sizing: border-box;
  border: 1px solid #cfccc7;
  border-bottom: 0;
  padding: 1px 1px 0 4px;
  display: flex;
  align-items: flex-start;
  justify-content: space-between;
  line-height: 19px;
}

.bottom-dock .dock-buttons {
  height: 19px;
}

.report {
  width: 1055px;
}

.python {
  flex: 1;
}
</style>
